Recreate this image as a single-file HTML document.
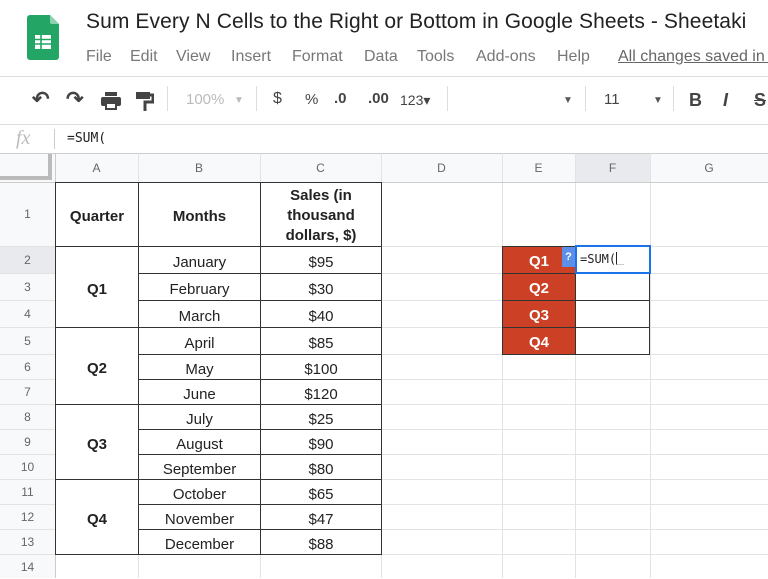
<!DOCTYPE html>
<html><head><meta charset="utf-8"><style>
*{margin:0;padding:0;box-sizing:border-box}
body{width:768px;height:578px;overflow:hidden;background:#fff;font-family:"Liberation Sans",sans-serif;position:relative}
.a{position:absolute}
.hl{position:absolute;height:1px;background:#e2e3e3}
.vl{position:absolute;width:1px;background:#e2e3e3}
.c{position:absolute;border:1px solid #333;background:#fff;display:flex;align-items:center;justify-content:center;font-size:15px;color:#222;text-align:center;line-height:20px;padding-top:5px}
.b{font-weight:bold}
.rn{position:absolute;left:0;width:55px;text-align:center;font-size:12px;color:#666;display:flex;align-items:center;justify-content:center}
.ch{position:absolute;top:153px;height:29px;font-size:12px;color:#666;display:flex;align-items:center;justify-content:center}
.m{position:absolute;top:48px;font-size:16px;color:#777;white-space:nowrap}
.tb{position:absolute;top:90px;font-size:17px;color:#444;font-weight:bold}
.q{position:absolute;left:502px;width:74px;background:#cc4125;border:1px solid #333;color:#fff;font-weight:bold;font-size:15px;display:flex;align-items:center;justify-content:center;padding-top:3px}
.f{position:absolute;left:575px;width:75px;border:1px solid #333;background:#fff}
</style></head><body>
<svg class="a" style="left:27px;top:15px" width="32" height="45" viewBox="0 0 32 45"><path d="M3 0h20l9 9v33a3 3 0 0 1-3 3H3a3 3 0 0 1-3-3V3a3 3 0 0 1 3-3z" fill="#23a566"/><path d="M23 0l9 9h-7a2 2 0 0 1-2-2z" fill="#8ed1b1"/><rect x="8" y="20" width="16" height="14" fill="#fff"/><path d="M8 24.5h16M8 29h16M14 20v14" stroke="#23a566" stroke-width="1.6"/></svg>
<div class="a" style="left:86px;top:10px;font-size:21px;color:#222;white-space:nowrap;letter-spacing:0.1px">Sum Every N Cells to the Right or Bottom in Google Sheets - Sheetaki</div>
<div class="m" style="left:86px">File</div>
<div class="m" style="left:130px">Edit</div>
<div class="m" style="left:176px">View</div>
<div class="m" style="left:231px">Insert</div>
<div class="m" style="left:292px">Format</div>
<div class="m" style="left:364px">Data</div>
<div class="m" style="left:417px">Tools</div>
<div class="m" style="left:476px">Add-ons</div>
<div class="m" style="left:557px">Help</div>
<div class="m" style="left:618px;text-decoration:underline;color:#666">All changes saved in Drive</div>
<div class="hl" style="left:0;top:76px;width:768px;background:#ddd"></div>
<div class="tb" style="left:32px;top:87px;font-size:21px">↶</div>
<div class="tb" style="left:66px;top:87px;font-size:21px">↷</div>
<svg class="a" style="left:101px;top:92px" width="20" height="18"><rect x="4" y="0" width="12" height="4" fill="#444"/><rect x="0" y="5" width="20" height="9" rx="2" fill="#444"/><rect x="4" y="11" width="12" height="7" fill="#444"/><rect x="6" y="12" width="8" height="4" fill="#fff"/></svg>
<svg class="a" style="left:136px;top:92px" width="18" height="19"><rect x="0" y="0" width="14" height="7" fill="#444"/><path d="M14 3h3v7H9v9" stroke="#444" stroke-width="3" fill="none"/></svg>
<div class="vl" style="left:167px;top:86px;height:25px;background:#ddd"></div>
<div class="a" style="left:186px;top:91px;font-size:15px;color:#bbb">100%</div>
<div class="a" style="left:234px;top:95px;font-size:10px;color:#bbb">▼</div>
<div class="vl" style="left:256px;top:86px;height:25px;background:#ddd"></div>
<div class="a" style="left:273px;top:90px;font-size:16px;color:#444">$</div>
<div class="a" style="left:305px;top:91px;font-size:15px;color:#444">%</div>
<div class="a" style="left:334px;top:90px;font-size:15px;color:#444;font-weight:bold">.0</div>
<div class="a" style="left:368px;top:90px;font-size:15px;color:#444;font-weight:bold">.00</div>
<div class="a" style="left:400px;top:92px;font-size:14px;color:#444">123▾</div>
<div class="vl" style="left:447px;top:86px;height:25px;background:#ddd"></div>
<div class="a" style="left:563px;top:95px;font-size:10px;color:#555">▼</div>
<div class="vl" style="left:585px;top:86px;height:25px;background:#ddd"></div>
<div class="a" style="left:604px;top:91px;font-size:15px;color:#444">11</div>
<div class="a" style="left:653px;top:95px;font-size:10px;color:#555">▼</div>
<div class="vl" style="left:673px;top:86px;height:25px;background:#ddd"></div>
<div class="a" style="left:689px;top:90px;font-size:18px;color:#444;font-weight:bold">B</div>
<div class="a" style="left:723px;top:90px;font-size:18px;color:#444;font-weight:bold;font-style:italic">I</div>
<div class="a" style="left:754px;top:90px;font-size:18px;color:#444;font-weight:bold;text-decoration:line-through">S</div>
<div class="hl" style="left:0;top:124px;width:768px;background:#ddd"></div>
<div class="a" style="left:16px;top:127px;font-size:20px;color:#bbb;font-family:'Liberation Serif',serif;font-style:italic">fx</div>
<div class="vl" style="left:54px;top:129px;height:20px;background:#ccc"></div>
<div class="a" style="left:67px;top:131px;font-size:13px;color:#222;font-family:'DejaVu Sans Mono',monospace">=SUM(</div>
<div class="hl" style="left:0;top:153px;width:768px;background:#ccc"></div>
<div class="a" style="left:0;top:154px;width:768px;height:28px;background:#f8f9fa"></div>
<div class="a" style="left:0;top:182px;width:55px;height:396px;background:#f8f9fa"></div>
<div class="a" style="left:576px;top:154px;width:74px;height:28px;background:#e8eaed"></div>
<div class="a" style="left:0;top:247px;width:55px;height:26px;background:#e8eaed"></div>
<div class="a" style="left:0;top:154px;width:52px;height:26px;border-right:4px solid #bbb;border-bottom:4px solid #bbb"></div>
<div class="vl" style="left:55px;top:153px;height:425px;background:#ccc"></div>
<div class="vl" style="left:138px;top:153px;height:425px"></div>
<div class="vl" style="left:260px;top:153px;height:425px"></div>
<div class="vl" style="left:381px;top:153px;height:425px"></div>
<div class="vl" style="left:502px;top:153px;height:425px"></div>
<div class="vl" style="left:575px;top:153px;height:425px"></div>
<div class="vl" style="left:650px;top:153px;height:425px"></div>
<div class="hl" style="left:0;top:182px;width:768px;background:#ccc"></div>
<div class="hl" style="left:0;top:246px;width:768px"></div>
<div class="hl" style="left:0;top:273px;width:768px"></div>
<div class="hl" style="left:0;top:300px;width:768px"></div>
<div class="hl" style="left:0;top:327px;width:768px"></div>
<div class="hl" style="left:0;top:354px;width:768px"></div>
<div class="hl" style="left:0;top:379px;width:768px"></div>
<div class="hl" style="left:0;top:404px;width:768px"></div>
<div class="hl" style="left:0;top:429px;width:768px"></div>
<div class="hl" style="left:0;top:454px;width:768px"></div>
<div class="hl" style="left:0;top:479px;width:768px"></div>
<div class="hl" style="left:0;top:504px;width:768px"></div>
<div class="hl" style="left:0;top:529px;width:768px"></div>
<div class="hl" style="left:0;top:554px;width:768px"></div>
<div class="ch" style="left:55px;width:83px">A</div>
<div class="ch" style="left:138px;width:122px">B</div>
<div class="ch" style="left:260px;width:121px">C</div>
<div class="ch" style="left:381px;width:121px">D</div>
<div class="ch" style="left:502px;width:73px">E</div>
<div class="ch" style="left:575px;width:75px">F</div>
<div class="ch" style="left:650px;width:118px">G</div>
<div class="rn" style="top:182px;height:64px">1</div>
<div class="rn" style="top:246px;height:27px">2</div>
<div class="rn" style="top:273px;height:27px">3</div>
<div class="rn" style="top:300px;height:27px">4</div>
<div class="rn" style="top:327px;height:27px">5</div>
<div class="rn" style="top:354px;height:25px">6</div>
<div class="rn" style="top:379px;height:25px">7</div>
<div class="rn" style="top:404px;height:25px">8</div>
<div class="rn" style="top:429px;height:25px">9</div>
<div class="rn" style="top:454px;height:25px">10</div>
<div class="rn" style="top:479px;height:25px">11</div>
<div class="rn" style="top:504px;height:25px">12</div>
<div class="rn" style="top:529px;height:25px">13</div>
<div class="rn" style="top:554px;height:25px">14</div>
<div class="c b" style="left:55px;top:182px;width:84px;height:65px">Quarter</div>
<div class="c b" style="left:138px;top:182px;width:123px;height:65px">Months</div>
<div class="c b" style="left:260px;top:182px;width:122px;height:65px;padding-top:2px">Sales (in<br>thousand<br>dollars, $)</div>
<div class="c b" style="left:55px;top:246px;width:84px;height:82px">Q1</div>
<div class="c b" style="left:55px;top:327px;width:84px;height:78px">Q2</div>
<div class="c b" style="left:55px;top:404px;width:84px;height:76px">Q3</div>
<div class="c b" style="left:55px;top:479px;width:84px;height:76px">Q4</div>
<div class="c" style="left:138px;top:246px;width:123px;height:28px">January</div>
<div class="c" style="left:260px;top:246px;width:122px;height:28px">$95</div>
<div class="c" style="left:138px;top:273px;width:123px;height:28px">February</div>
<div class="c" style="left:260px;top:273px;width:122px;height:28px">$30</div>
<div class="c" style="left:138px;top:300px;width:123px;height:28px">March</div>
<div class="c" style="left:260px;top:300px;width:122px;height:28px">$40</div>
<div class="c" style="left:138px;top:327px;width:123px;height:28px">April</div>
<div class="c" style="left:260px;top:327px;width:122px;height:28px">$85</div>
<div class="c" style="left:138px;top:354px;width:123px;height:26px">May</div>
<div class="c" style="left:260px;top:354px;width:122px;height:26px">$100</div>
<div class="c" style="left:138px;top:379px;width:123px;height:26px">June</div>
<div class="c" style="left:260px;top:379px;width:122px;height:26px">$120</div>
<div class="c" style="left:138px;top:404px;width:123px;height:26px">July</div>
<div class="c" style="left:260px;top:404px;width:122px;height:26px">$25</div>
<div class="c" style="left:138px;top:429px;width:123px;height:26px">August</div>
<div class="c" style="left:260px;top:429px;width:122px;height:26px">$90</div>
<div class="c" style="left:138px;top:454px;width:123px;height:26px">September</div>
<div class="c" style="left:260px;top:454px;width:122px;height:26px">$80</div>
<div class="c" style="left:138px;top:479px;width:123px;height:26px">October</div>
<div class="c" style="left:260px;top:479px;width:122px;height:26px">$65</div>
<div class="c" style="left:138px;top:504px;width:123px;height:26px">November</div>
<div class="c" style="left:260px;top:504px;width:122px;height:26px">$47</div>
<div class="c" style="left:138px;top:529px;width:123px;height:26px">December</div>
<div class="c" style="left:260px;top:529px;width:122px;height:26px">$88</div>
<div class="q" style="top:246px;height:28px">Q1</div>
<div class="q" style="top:273px;height:28px">Q2</div>
<div class="q" style="top:300px;height:28px">Q3</div>
<div class="q" style="top:327px;height:28px">Q4</div>
<div class="f" style="top:273px;height:28px"></div>
<div class="f" style="top:300px;height:28px"></div>
<div class="f" style="top:327px;height:28px"></div>
<div class="a" style="left:575px;top:245px;width:76px;height:29px;border:2px solid #1a73e8;background:#fff;font-family:'DejaVu Sans Mono',monospace;font-size:12px;color:#222;padding:5px 0 0 3px">=SUM(<span style="border-left:1px solid #222;border-bottom:1px solid #ccc;display:inline-block;width:8px;height:13px;vertical-align:-2px"></span></div>
<div class="a" style="left:562px;top:247px;width:13px;height:20px;background:#5b8fe8;color:#fff;font-size:11px;font-weight:bold;text-align:center;line-height:20px">?</div>
</body></html>
